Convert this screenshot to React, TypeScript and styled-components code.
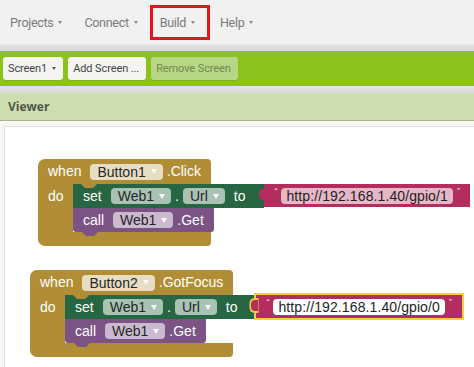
import React from 'react';
import styled, { createGlobalStyle, css } from 'styled-components';

const Global = createGlobalStyle`
  html, body { margin: 0; padding: 0; }
  body {
    width: 474px;
    height: 367px;
    overflow: hidden;
    background: #f8f7f1;
    font-family: Roboto, "Liberation Sans", sans-serif;
  }
`;

const Page = styled.div`
  display: flex;
  flex-direction: column;
  height: 367px;
`;

const MenuBar = styled.nav`
  height: 44px;
  flex: none;
  display: flex;
  align-items: center;
  background: #f1f1f1;
`;

const MenuItem = styled.div<{ $active?: boolean }>`
  height: 35px;
  display: flex;
  align-items: center;
  gap: 5px;
  padding: 0 12px 0 10px;
  box-sizing: border-box;
  color: #7a7a7a;
  font-size: 12.5px;
  letter-spacing: -0.3px;
  ${(p) =>
    p.$active &&
    css`
      padding-right: 15px;
      outline: 3px solid #e3141d;
      outline-offset: -3px;
    `}
`;

const SmallCaret = styled.span<{ $color?: string }>`
  width: 0;
  height: 0;
  border-left: 2.5px solid transparent;
  border-right: 2.5px solid transparent;
  border-top: 3px solid ${(p) => p.$color ?? '#8a8a8a'};
`;

const Strip = styled.div`
  height: 7px;
  flex: none;
  background: linear-gradient(#e4e4e4, #d9d9d9);
`;

const Toolbar = styled.div`
  height: 35px;
  flex: none;
  display: flex;
  align-items: center;
  gap: 5px;
  padding-left: 3px;
  background: #8dc21c;
`;

const ToolButton = styled.div<{ $disabled?: boolean }>`
  height: 23px;
  display: flex;
  align-items: center;
  gap: 5px;
  padding: 0 7px 0 5px;
  border-radius: 3px;
  font-size: 11px;
  letter-spacing: -0.1px;
  background: ${(p) => (p.$disabled ? '#b7d787' : '#f4f4f2')};
  color: ${(p) => (p.$disabled ? '#6f8a4c' : '#444')};
  box-shadow: 0 1px 0 rgba(0, 0, 0, 0.08);
`;

const ViewerHeader = styled.div`
  height: 27px;
  flex: none;
  display: flex;
  align-items: center;
  padding-left: 8px;
  background: #cfdeb0;
  border-bottom: 1px solid #a5b38f;
  font-family: "Open Sans", Roboto, sans-serif;
  font-weight: 700;
  font-size: 12px;
  color: #505648;
`;

const Workspace = styled.div`
  position: relative;
  flex: 1;
  margin: 5px 0 0 4px;
  background: #ffffff;
  border-top: 1px solid #dedede;
  border-left: 1px solid #dedede;
`;

/* ---------- Blocks ---------- */

const EVENT = '#b18e35';
const SETTER = '#266643';
const METHOD = '#7c5385';
const TEXT = '#b32d5e';

const EventBlock = styled.div<{ $x: number; $y: number }>`
  position: absolute;
  left: ${(p) => p.$x}px;
  top: ${(p) => p.$y}px;
  display: flex;
  flex-direction: column;
  font-family: "Liberation Sans", Arial, sans-serif;
  font-size: 14px;
  color: #ffffff;
`;

const Hat = styled.div`
  position: relative;
  height: 25px;
  display: flex;
  align-items: center;
  gap: 9px;
  padding: 0 10px;
  background: ${EVENT};
  border-radius: 7px 4px 0 0;
  white-space: nowrap;
  &::after {
    content: '';
    position: absolute;
    left: 43px;
    bottom: -4px;
    width: 16px;
    height: 4px;
    background: ${EVENT};
    clip-path: polygon(0 0, 100% 0, 75% 100%, 25% 100%);
    z-index: 2;
  }
`;

const Mouth = styled.div`
  display: flex;
`;

const DoColumn = styled.div`
  width: 35px;
  flex: none;
  box-sizing: border-box;
  padding-left: 10px;
  line-height: 24px;
  background: ${EVENT};
`;

const Stack = styled.div`
  width: 0;
  display: flex;
  flex-direction: column;
  align-items: flex-start;
`;

const Foot = styled.div`
  height: 14px;
  background: ${EVENT};
  border-radius: 0 0 4px 7px;
`;

const SetRow = styled.div`
  display: flex;
  width: max-content;
  align-items: stretch;
`;

const Statement = styled.div<{ $color: string; $bump?: boolean }>`
  position: relative;
  height: 24px;
  width: max-content;
  box-sizing: border-box;
  display: flex;
  align-items: center;
  gap: 9px;
  padding: 0 10px;
  background: ${(p) => p.$color};
  white-space: nowrap;
  ${(p) =>
    p.$bump &&
    css`
      border-radius: 0 0 3px 3px;
      &::after {
        content: '';
        position: absolute;
        left: 9px;
        bottom: -4px;
        width: 16px;
        height: 4px;
        background: ${p.$color};
        clip-path: polygon(0 0, 100% 0, 75% 100%, 25% 100%);
        z-index: 2;
      }
    `}
`;

const SetBlock = styled(Statement)`
  padding-right: 19px;
`;

const Label = styled.span<{ $dot?: 'lead' | 'solo' }>`
  line-height: 17px;
  ${(p) => p.$dot === 'lead' && css`margin-left: -5px;`}
  ${(p) => p.$dot === 'solo' && css`margin: 0 -5px;`}
`;

const Dropdown = styled.span<{ $bg: string }>`
  display: inline-flex;
  align-items: center;
  gap: 5px;
  height: 16px;
  padding: 0 6px 0 7px;
  border-radius: 4px;
  background: ${(p) => p.$bg};
  color: #262626;
  line-height: 16px;
`;

const Caret = styled.span`
  width: 0;
  height: 0;
  border-left: 3.5px solid transparent;
  border-right: 3.5px solid transparent;
  border-top: 5px solid rgba(255, 255, 255, 0.95);
`;

const TextBlock = styled.div<{ $selected?: boolean }>`
  position: relative;
  display: flex;
  align-items: center;
  gap: 4px;
  height: 23px;
  padding: 0 10px 0 10px;
  background: ${TEXT};
  ${(p) =>
    p.$selected &&
    css`
      box-shadow: 0 0 0 2px #f7cf3a;
    `}
  &::before {
    content: '';
    position: absolute;
    left: -5px;
    top: 5px;
    width: 7px;
    height: 11px;
    background: ${TEXT};
    border-radius: 4px 0 0 4px;
    ${(p) =>
      p.$selected &&
      css`
        box-shadow: 0 0 0 2px #f7cf3a;
        clip-path: inset(-2px 0 -2px -2px);
      `}
  }
`;

const Quote = styled.span`
  align-self: flex-start;
  margin-top: 3px;
  font-size: 9px;
  line-height: 9px;
  color: rgba(255, 255, 255, 0.85);
`;

const TextField = styled.span<{ $editing?: boolean }>`
  height: 16px;
  line-height: 16px;
  padding: 0 5px 0 5px;
  border-radius: 4px;
  background: ${(p) => (p.$editing ? '#ffffff' : '#e6b7c7')};
  color: #1e1e1e;
  letter-spacing: 0.1px;
`;

type EventProps = {
  x: number;
  y: number;
  component: string;
  event: string;
  url: string;
  selected?: boolean;
};

const WhenBlock: React.FC<EventProps> = ({ x, y, component, event, url, selected }) => (
  <EventBlock $x={x} $y={y}>
    <Hat>
      <Label>when</Label>
      <Dropdown $bg="#e7ddc2">
        {component}
        <Caret />
      </Dropdown>
      <Label $dot="lead">.{event}</Label>
    </Hat>
    <Mouth>
      <DoColumn>do</DoColumn>
      <Stack>
        <SetRow>
          <SetBlock $color={SETTER}>
            <Label>set</Label>
            <Dropdown $bg="#a8c2b4">
              Web1
              <Caret />
            </Dropdown>
            <Label $dot="solo">.</Label>
            <Dropdown $bg="#a8c2b4">
              Url
              <Caret />
            </Dropdown>
            <Label>to</Label>
          </SetBlock>
          <TextBlock $selected={selected}>
            <Quote>“</Quote>
            <TextField $editing={selected}>{url}</TextField>
            <Quote>”</Quote>
          </TextBlock>
        </SetRow>
        <Statement $color={METHOD} $bump>
          <Label>call</Label>
          <Dropdown $bg="#cbbace">
            Web1
            <Caret />
          </Dropdown>
          <Label $dot="lead">.Get</Label>
        </Statement>
      </Stack>
    </Mouth>
    <Foot />
  </EventBlock>
);

export default function App() {
  return (
    <Page>
      <Global />
      <MenuBar>
        <MenuItem>
          Projects <SmallCaret />
        </MenuItem>
        <MenuItem>
          Connect <SmallCaret />
        </MenuItem>
        <MenuItem $active>
          Build <SmallCaret />
        </MenuItem>
        <MenuItem>
          Help <SmallCaret />
        </MenuItem>
      </MenuBar>
      <Strip />
      <Toolbar>
        <ToolButton>
          Screen1 <SmallCaret $color="#555" />
        </ToolButton>
        <ToolButton>Add Screen ...</ToolButton>
        <ToolButton $disabled>Remove Screen</ToolButton>
      </Toolbar>
      <Strip />
      <ViewerHeader>Viewer</ViewerHeader>
      <Workspace>
        <WhenBlock x={33} y={32} component="Button1" event="Click" url="http://192.168.1.40/gpio/1" />
        <WhenBlock
          x={25}
          y={143}
          component="Button2"
          event="GotFocus"
          url="http://192.168.1.40/gpio/0"
          selected
        />
      </Workspace>
    </Page>
  );
}
